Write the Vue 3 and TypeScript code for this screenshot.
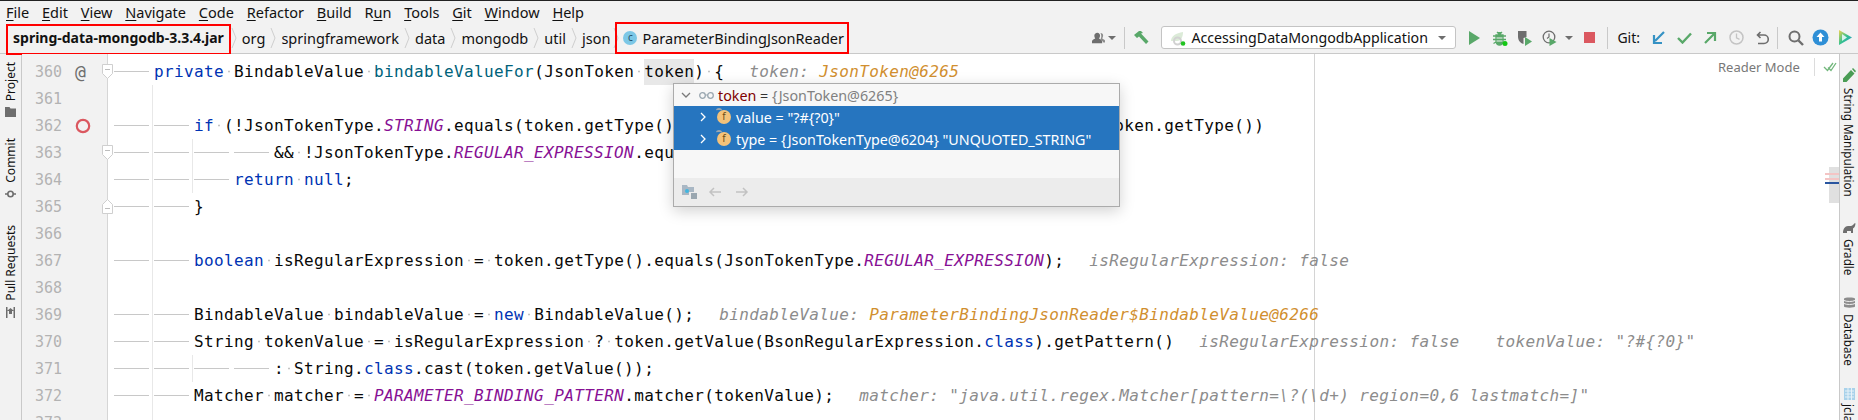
<script setup lang="ts">
type Tok = [string, string?]
interface Line { n: number; tabs: number; toks: Tok[]; mark?: string; fold?: string; guide?: boolean }

const menu = [
  ['', 'F', 'ile'], ['', 'E', 'dit'], ['', 'V', 'iew'], ['', 'N', 'avigate'], ['', 'C', 'ode'], ['', 'R', 'efactor'],
  ['', 'B', 'uild'], ['R', 'u', 'n'], ['', 'T', 'ools'], ['', 'G', 'it'], ['', 'W', 'indow'], ['', 'H', 'elp'],
]
const crumbs = ['org', 'springframework', 'data', 'mongodb', 'util', 'json']

const lines: Line[] = [
  { n: 360, tabs: 1, mark: 'at', fold: 'open', toks: [['private', 'k'], [' '], ['BindableValue'], [' '], ['bindableValueFor', 'm'], ['(JsonToken'], [' '], ['token', 'hl'], [')'], [' '], ['{'], ['', 'gap'], ['token: ', 'h'], ['JsonToken@6265', 'v']] },
  { n: 361, tabs: 0, toks: [] },
  { n: 362, tabs: 2, mark: 'bp', toks: [['if', 'k'], [' '], ['(!JsonTokenType.'], ['STRING', 'f'], ['.equals(token.getType())'], [' '], ['&&'], [' '], ['!JsonTokenType.'], ['UNQUOTED_STRING', 'f'], ['.equals(token.getType())']] },
  { n: 363, tabs: 4, fold: 'open', guide: true, toks: [['&&'], [' '], ['!JsonTokenType.'], ['REGULAR_EXPRESSION', 'f'], ['.equals(token.getType()))'], [' '], ['{']] },
  { n: 364, tabs: 3, guide: true, toks: [['return', 'k'], [' '], ['null', 'k'], [';']] },
  { n: 365, tabs: 2, fold: 'close', toks: [['}']] },
  { n: 366, tabs: 0, toks: [] },
  { n: 367, tabs: 2, toks: [['boolean', 'k'], [' '], ['isRegularExpression'], [' '], ['='], [' '], ['token.getType().equals(JsonTokenType.'], ['REGULAR_EXPRESSION', 'f'], [');'], ['', 'gap'], ['isRegularExpression: false', 'h']] },
  { n: 368, tabs: 0, toks: [] },
  { n: 369, tabs: 2, toks: [['BindableValue'], [' '], ['bindableValue'], [' '], ['='], [' '], ['new', 'k'], [' '], ['BindableValue();'], ['', 'gap'], ['bindableValue: ', 'h'], ['ParameterBindingJsonReader$BindableValue@6266', 'v']] },
  { n: 370, tabs: 2, toks: [['String'], [' '], ['tokenValue'], [' '], ['='], [' '], ['isRegularExpression'], [' '], ['?'], [' '], ['token.getValue(BsonRegularExpression.'], ['class', 'k'], [').getPattern()'], ['', 'gap'], ['isRegularExpression: false', 'h'], ['', 'gap2'], ['tokenValue: "?#{?0}"', 'h']] },
  { n: 371, tabs: 4, guide: true, toks: [[':'], [' '], ['String.'], ['class', 'k'], ['.cast(token.getValue());']] },
  { n: 372, tabs: 2, toks: [['Matcher'], [' '], ['matcher'], [' '], ['='], [' '], ['PARAMETER_BINDING_PATTERN', 'f'], ['.matcher(tokenValue);'], ['', 'gap'], ['matcher: "java.util.regex.Matcher[pattern=\\?(\\d+) region=0,6 lastmatch=]"', 'h']] },
  { n: 373, tabs: 0, toks: [] },
]
</script>

<template>
  <div class="ide">
    <div class="menubar">
      <span v-for="m in menu" :key="m[1] + m[2]" class="menu-item">{{ m[0] }}<u>{{ m[1] }}</u>{{ m[2] }}</span>
    </div>

    <div class="navbar">
      <span class="crumb jar">spring-data-mongodb-3.3.4.jar</span>
      <template v-for="c in crumbs" :key="c">
        <svg class="chev" width="6" height="22" viewBox="0 0 6 22"><path d="M1 1l4 10-4 10" fill="none" stroke="#cfcfcf" /></svg>
        <span class="crumb">{{ c }}</span>
      </template>
      <svg class="chev last" width="6" height="22" viewBox="0 0 6 22"><path d="M1 1l4 10-4 10" fill="none" stroke="#cfcfcf" /></svg>
      <span class="class-ic">c</span>
      <span class="crumb cls">ParameterBindingJsonReader</span>
      <span class="red-box box-a"></span>
      <span class="red-box box-b"></span>

      <div class="tools">
        <svg class="ic-person" width="15" height="14" viewBox="0 0 15 14"><path d="M6 1c2 0 3 1.5 3 3.4 0 1.3-.6 2.3-1.2 3 0 .8 3.2 1.4 3.6 3.1V13H0v-2.5c.4-1.7 3.6-2.3 3.6-3.1C3 6.7 2.600 5.700 2.600 4.400 2.600 2.500 4 1 6 1z" fill="#6e6e6e" /><path d="M9.500 1.300c2 0 3 1.300 3 3 0 1.200-.5 2.200-1 2.900 0 .8 2.800 1.300 3.200 2.900V12h-2c-.3-1.700-2.400-2.700-3.300-3.400.7-1 1.100-2.500 1-4-.1-1.300-.5-2.400-.9-3.300z" fill="#8c8c8c" /></svg>
        <span class="caret c-person"></span>
        <span class="sep sep-a"></span>
        <svg class="ic-hammer" width="15" height="15" viewBox="0 0 15 15"><path d="M0 5l5-4 2 0 2 2-2 .5L14.500 11.500 12 14 5 6.500 3 8z" fill="#59a869" /></svg>
        <div class="combo">
          <svg width="16" height="16" viewBox="0 0 16 16"><path d="M1 11C1 6 6 3 13 2c0 5-2 9-6 9z" fill="#dcebd8" /><circle cx="7.500" cy="11" r="3.500" fill="none" stroke="#d2d2d2" stroke-width="2" /><circle cx="13" cy="13.500" r="2.300" fill="#22c322" /></svg>
          <span class="combo-text">AccessingDataMongodbApplication</span>
          <span class="caret c-combo"></span>
        </div>
        <div class="run-group">
          <span class="slot"><svg width="11" height="14" viewBox="0 0 11 14"><path d="M0 0l11 7-11 7z" fill="#59a869" /></svg></span>
          <span class="slot"><svg width="16" height="16" viewBox="0 0 16 16"><path d="M5 2l1.500 1.500h2L10 2M4 5h7v6.500a3.500 3.500 0 0 1-7 0zM1 6h3M11 6h3M1 9.500h3M11 9.500h3M1.500 13.500L4 12M13.500 13.500L11 12" fill="#59a869" stroke="#59a869" stroke-width="1.300" /><path d="M4.500 8h6M4.500 11h6" stroke="#f2f2f2" /><circle cx="13" cy="13.500" r="2.500" fill="#14c814" /></svg></span>
          <span class="slot"><svg width="16" height="16" viewBox="0 0 16 16"><path d="M1 1h8.500v6l-3 1v6C3 13 1 10 1 6.500z" fill="#6e6e6e" /><path d="M8 7l7 4.500L8 16z" fill="#59a869" /></svg></span>
          <span class="slot"><svg width="15" height="16" viewBox="0 0 15 16"><circle cx="7" cy="7" r="5.800" fill="none" stroke="#6e6e6e" stroke-width="1.300" /><path d="M7 3.500V7L5 8.500" fill="none" stroke="#6e6e6e" stroke-width="1.200" /><path d="M7.500 8L14.500 12 7.500 16z" fill="#59a869" /></svg></span>
        </div>
        <span class="caret c-prof"></span>
        <span class="stop"></span>
        <span class="sep sep-b"></span>
        <span class="git">Git:</span>
        <div class="git-group">
          <span class="slot"><svg width="13" height="13" viewBox="0 0 13 13"><path d="M12 1L3 10M2 4v8h8" fill="none" stroke="#3592c4" stroke-width="2.200" /></svg></span>
          <span class="slot"><svg width="15" height="12" viewBox="0 0 15 12"><path d="M1 6l4.500 4.500L14 1.500" fill="none" stroke="#59a869" stroke-width="2.400" /></svg></span>
          <span class="slot"><svg width="13" height="13" viewBox="0 0 13 13"><path d="M1 12l9-9M3 2h8v8" fill="none" stroke="#59a869" stroke-width="2.200" /></svg></span>
          <span class="slot"><svg width="15" height="15" viewBox="0 0 15 15"><circle cx="7.500" cy="7.500" r="6.500" fill="none" stroke="#c4c4c4" stroke-width="1.500" /><path d="M7.500 3.500v4.300l3 1.500" fill="none" stroke="#c4c4c4" stroke-width="1.300" /></svg></span>
          <span class="slot"><svg width="13" height="14" viewBox="0 0 13 14"><path d="M1.500 4h6.500a4 4 0 0 1 0 8.500H2M4.500 1L1.500 4l3 3" fill="none" stroke="#6e6e6e" stroke-width="1.600" /></svg></span>
        </div>
        <span class="sep sep-c"></span>
        <div class="end-group">
          <span class="slot"><svg width="16" height="16" viewBox="0 0 16 16"><circle cx="6.500" cy="6.500" r="5" fill="none" stroke="#6e6e6e" stroke-width="2" /><path d="M10.500 10.500L15 15" stroke="#6e6e6e" stroke-width="2.400" /></svg></span>
          <span class="slot"><svg width="17" height="17" viewBox="0 0 17 17"><circle cx="8.500" cy="8.500" r="8" fill="#2f8fd6" /><path d="M8.500 3.500l4 4.500h-2.500v4.500h-3V8h-2.500z" fill="#fff" /></svg></span>
          <span class="slot"><svg width="15" height="17" viewBox="0 0 15 17"><defs><linearGradient id="lg" x1="0" x2="1" y1="0" y2="1"><stop offset="0" stop-color="#f2d24e" /><stop offset=".5" stop-color="#35c28e" /><stop offset="1" stop-color="#1e88d8" /></linearGradient></defs><path d="M1 1l13 7.500L1 16z" fill="url(#lg)" /><path d="M4 5l5 3.500L4 12z" fill="#d8f3f0" /></svg></span>
        </div>
      </div>
    </div>

    <div class="main">
      <aside class="strip left">
        <div class="tw tw-project">
          <span class="vl">Project</span>
          <svg width="11" height="10" viewBox="0 0 11 10"><path d="M0 0h4.500l1 1.500H11V10H0z" fill="#6e6e6e" /></svg>
        </div>
        <div class="tw tw-commit">
          <span class="vl">Commit</span>
          <svg width="11" height="10" viewBox="0 0 11 10"><circle cx="5.500" cy="5" r="2.700" fill="none" stroke="#6e6e6e" stroke-width="1.600" /><path d="M0 5h3M8 5h3" stroke="#6e6e6e" stroke-width="1.400" /></svg>
        </div>
        <div class="tw tw-pull">
          <span class="vl">Pull Requests</span>
          <svg width="11" height="11" viewBox="0 0 11 11"><path d="M1 0h1.500v11H1zM8.500 0H10v11H8.500zM5.500 1L9 4H7v3H4V4H2z" fill="#6e6e6e" /></svg>
        </div>
      </aside>

      <div class="editor">
        <div v-for="l in lines" :key="l.n" class="row" :class="{ guided: l.guide }">
          <div class="gutter">
            <span class="num">{{ l.n }}</span>
            <span class="mark">
              <template v-if="l.mark === 'at'">@</template>
              <svg v-else-if="l.mark === 'bp'" width="16" height="16" viewBox="0 0 16 16"><circle cx="8" cy="8" r="6.200" fill="none" stroke="#db5860" stroke-width="2.200" /></svg>
            </span>
            <svg v-if="l.fold" class="fold" :class="{ flip: l.fold === 'close' }" width="11" height="15" viewBox="0 0 11 15"><path d="M.5.500h10v9l-5 5-5-5z" fill="#fff" stroke="#cfcfcf" /><path d="M3 5.500h5" stroke="#bdbdbd" /></svg>
          </div>
          <div class="code">
            <span v-for="t in l.tabs" :key="t" class="tab"></span>
            <template v-for="(tk, i) in l.toks" :key="i">
              <span v-if="tk[0] === ' '" class="sp">{{ tk[0] }}</span>
              <span v-else :class="tk[1]">{{ tk[0] }}</span>
            </template>
          </div>
        </div>

        <div class="reader"><span>Reader Mode</span><i class="reader-sep"></i>
          <svg width="14" height="12" viewBox="0 0 14 12"><path d="M1 6l3.500 3.500L10 2M5 6.500l3 3L13 2" fill="none" stroke="#72b77c" stroke-width="1.300" /></svg>
        </div>
        <div class="thumb"></div>
        <div class="stripe p1"></div>
        <div class="stripe p2"></div>
        <div class="stripe b1"></div>

        <div class="popup">
          <div class="p-head">
            <svg class="arrow-d" width="10" height="6" viewBox="0 0 10 6"><path d="M1 1l4 4 4-4" fill="none" stroke="#7a7a7a" stroke-width="1.300" /></svg>
            <svg class="glasses" width="15" height="7" viewBox="0 0 15 7"><circle cx="3.500" cy="3.500" r="2.800" fill="none" stroke="#9aa7b0" stroke-width="1.300" /><circle cx="11.500" cy="3.500" r="2.800" fill="none" stroke="#9aa7b0" stroke-width="1.300" /><path d="M6 3h3" stroke="#9aa7b0" /></svg>
            <span class="p-name">token</span><span class="p-eq"> = </span><span class="p-val">{JsonToken@6265}</span>
          </div>
          <div class="p-row">
            <svg class="arrow-r" width="6" height="10" viewBox="0 0 6 10"><path d="M1 1l4 4-4 4" fill="none" stroke="#fff" stroke-width="1.300" /></svg>
            <span class="f-ic">f</span>
            <span>value = "?#{?0}"</span>
          </div>
          <div class="p-row">
            <svg class="arrow-r" width="6" height="10" viewBox="0 0 6 10"><path d="M1 1l4 4-4 4" fill="none" stroke="#fff" stroke-width="1.300" /></svg>
            <span class="f-ic">f</span>
            <span>type = {JsonTokenType@6204} "UNQUOTED_STRING"</span>
          </div>
          <div class="p-empty"></div>
          <div class="p-foot">
            <svg width="15" height="14" viewBox="0 0 15 14"><path d="M0 0h5l1 2h6v5H7v3H0z" fill="#a9b7c4" /><circle cx="5" cy="6" r="2" fill="#40b6e0" /><path d="M9 8h6v6H9z" fill="#9aa7b0" /></svg>
            <svg class="f-a1" width="14" height="10" viewBox="0 0 14 10"><path d="M13 5H2M6 1L2 5l4 4" fill="none" stroke="#c2c2c2" stroke-width="1.500" /></svg>
            <svg class="f-a2" width="14" height="10" viewBox="0 0 14 10"><path d="M1 5h11M8 1l4 4-4 4" fill="none" stroke="#c2c2c2" stroke-width="1.500" /></svg>
          </div>
        </div>
      </div>

      <aside class="strip right">
        <svg class="r-ic" width="13" height="14" viewBox="0 0 13 14"><path d="M0 14v-3.500L8 2l3.500 3.500L3.500 14zM9 1l1-1 3 3-1 1.500z" fill="#499c54" /></svg>
        <span class="rl rl-string">String Manipulation</span>
        <svg class="r-ic" width="13" height="11" viewBox="0 0 13 11"><path d="M0 11c0-4 2-7 5-7h3c1 0 1.500-1 2.500-1.500.5-1 1.500-1.500 2-1-.2 1.500-.5 4-2.500 5v4.500H8V9H4v2z" fill="#6e6e6e" /></svg>
        <span class="rl rl-gradle">Gradle</span>
        <svg class="r-ic" width="11" height="13" viewBox="0 0 11 13"><path d="M0 2.500C0 1 11 1 11 2.500v8C11 12 0 12 0 10.500z" fill="#8c8c8c" /><path d="M0 4.500c2 1.300 9 1.300 11 0M0 7.500c2 1.300 9 1.300 11 0" fill="none" stroke="#f2f2f2" /></svg>
        <span class="rl rl-db">Database</span>
        <svg class="r-ic" width="11" height="12" viewBox="0 0 11 12"><rect width="11" height="12" fill="#a9d2ea" /><path d="M1 3h9M1 6h9M1 9h9M4 0v12M7.500 0v12" stroke="#e8f2f8" /></svg>
        <span class="rl rl-jc">jclasslib</span>
      </aside>
    </div>
  </div>
</template>

<style>
html, body { margin: 0; background: #fff; }
</style>

<style scoped>
.ide {
  width: 1858px;
  height: 420px;
  overflow: hidden;
  display: flex;
  flex-direction: column;
  background: #f2f2f2;
  font-family: "Noto Sans", sans-serif;
  color: #111;
  border-top: 1px solid #222;
  box-sizing: border-box;
}
.menubar {
  height: 21px;
  display: flex;
  align-items: center;
  gap: 12.8px;
  padding-left: 6px;
  font-size: 14.5px;
}
.menu-item u { text-underline-offset: 2px; }

.navbar {
  position: relative;
  height: 31px;
  display: flex;
  align-items: center;
  padding-left: 13px;
  font-size: 14.5px;
  border-bottom: 1px solid #c9c9c9;
  flex: none;
}
.crumb { white-space: nowrap; }
.jar { font-weight: 700; font-size: 14px; margin-right: 2px; }
.chev { margin: 0 5px; flex: none; }
.chev.last { margin: 0 0 0 3px; }
.class-ic {
  width: 14px;
  height: 14px;
  margin-left: 4px;
  border-radius: 50%;
  background: #7cc7e6;
  color: #1f4f66;
  font-size: 10px;
  line-height: 13px;
  text-align: center;
  flex: none;
}
.cls { margin-left: 5px; }
.red-box { position: absolute; border: 2px solid #f00; box-sizing: border-box; pointer-events: none; }
.box-a { left: 6px; top: 2px; width: 225px; height: 31px; }
.box-b { left: 615px; top: 0; width: 234px; height: 32px; }

.tools {
  position: absolute;
  left: 1092px;
  right: 0;
  top: 0;
  bottom: 0;
  display: flex;
  align-items: center;
  font-size: 14px;
}
.caret { width: 0; height: 0; border-left: 4px solid transparent; border-right: 4px solid transparent; border-top: 4px solid #6e6e6e; flex: none; }
.c-person { margin-left: 3px; }
.sep { width: 1px; height: 22px; background: #c9c9c9; flex: none; }
.sep-a { margin-left: 8px; }
.ic-hammer { margin-left: 9px; flex: none; }
.combo {
  margin-left: 12px;
  width: 295px;
  height: 23px;
  box-sizing: border-box;
  border: 1px solid #c4c4c4;
  border-radius: 3px;
  background: #fff;
  display: flex;
  align-items: center;
  padding-left: 8px;
  flex: none;
}
.combo-text { margin-left: 5px; font-size: 14.2px; white-space: nowrap; }
.c-combo { margin-left: auto; margin-right: 9px; }
.run-group { display: flex; margin-left: 6px; }
.slot { width: 25px; display: flex; justify-content: center; align-items: center; flex: none; }
.c-prof { margin-left: 3px; }
.stop { width: 11px; height: 11px; background: #db5860; margin-left: 11px; flex: none; }
.sep-b { margin-left: 12px; }
.git { margin-left: 9px; width: 23px; }
.git-group { display: flex; gap: 1px; margin-left: 6px; }
.sep-c { margin-left: 2px; }
.end-group { display: flex; margin-left: 5px; }

.main { flex: 1; display: flex; min-height: 0; }
.strip { flex: none; background: #f2f2f2; }
.strip.left {
  width: 21px;
  border-right: 1px solid #c9c9c9;
  display: flex;
  flex-direction: column;
  align-items: center;
  font-size: 12px;
}
.tw { display: flex; flex-direction: column; align-items: center; gap: 6px; }
.tw-project { margin-top: 8px; }
.tw-commit { margin-top: 21px; }
.tw-pull { margin-top: 26px; }
.vl { writing-mode: vertical-rl; transform: rotate(180deg); line-height: 14px; white-space: nowrap; }

.strip.right {
  width: 18px;
  border-left: 1px solid #c9c9c9;
  display: flex;
  flex-direction: column;
  align-items: center;
  padding-top: 14px;
  font-size: 11.7px;
  overflow: hidden;
}
.r-ic { flex: none; }
.rl { writing-mode: vertical-rl; line-height: 14px; white-space: nowrap; flex: none; margin-top: 6px; }
.rl-string { margin-bottom: 25px; }
.rl-gradle { margin-bottom: 21px; }
.rl-db { margin-top: 5px; margin-bottom: 22px; }
.rl-jc { margin-top: 4px; }

.editor {
  position: relative;
  flex: 1;
  padding-top: 4px;
  overflow: hidden;
  background:
    linear-gradient(#d4d4d4, #d4d4d4) no-repeat 1292px 0 / 1px 100%,
    linear-gradient(#e8e8e8, #e8e8e8) no-repeat 130px 31px / 1px 100%,
    linear-gradient(to right, #f2f2f2 85px, #d6d6d6 85px, #d6d6d6 86px, #fff 86px);
}
.row {
  height: 27px;
  display: flex;
  align-items: center;
  font-family: "DejaVu Sans Mono", monospace;
  font-size: 16px;
  letter-spacing: 0.37px;
  white-space: pre;
}
.row.guided {
  background: linear-gradient(#e8e8e8, #e8e8e8) no-repeat 170px 0 / 1px 100%;
}
.gutter { position: relative; width: 86px; flex: none; display: flex; align-items: center; height: 100%; }
.num { margin-left: 13px; width: 40px; color: #b3b3b3; font-size: 15px; letter-spacing: 0; }
.mark { color: #6e6e6e; display: flex; align-items: center; font-size: 18px; letter-spacing: 0; }
.fold { position: absolute; left: 80px; top: 6px; }
.fold.flip { transform: scaleY(-1); }
.code { padding-left: 6px; display: flex; align-items: center; height: 100%; color: #080808; }
.tab { width: 40px; height: 100%; flex: none; background: linear-gradient(#c8c8c8, #c8c8c8) no-repeat 0 50% / 35px 1px; }
.sp { width: 10px; flex: none; background: radial-gradient(circle, #c4c4c4 0.9px, transparent 1.2px); }
.k { color: #0033b3; }
.m { color: #00627a; }
.f { color: #871094; font-style: italic; }
.hl { background: #e8e8e8; height: 26px; line-height: 26px; }
.gap { width: 25px; flex: none; }
.gap2 { width: 36px; flex: none; }
.h { color: #8c8c8c; font-style: italic; }
.v { color: #d18f2f; font-style: italic; }

.reader {
  position: absolute;
  top: 3px;
  left: 1696px;
  height: 20px;
  display: flex;
  align-items: center;
  font-size: 13px;
  color: #787878;
  white-space: nowrap;
}
.reader-sep { width: 1px; height: 18px; background: #dcdcdc; margin: 0 8px 0 14px; }
.thumb { position: absolute; left: 1807px; top: 113px; width: 10px; height: 36px; background: #e0e0e0; }
.stripe { position: absolute; left: 1803px; width: 14px; height: 2px; }
.p1 { top: 119px; background: #f4c4c4; }
.p2 { top: 124px; background: #f4c4c4; }
.b1 { top: 128px; background: #2a56a0; }

.popup {
  position: absolute;
  left: 651px;
  top: 29px;
  width: 447px;
  height: 124px;
  box-sizing: border-box;
  border: 1px solid #ababab;
  background: #f7f7f7;
  box-shadow: 0 4px 14px rgba(0, 0, 0, 0.18);
  display: flex;
  flex-direction: column;
  font-size: 14.3px;
  letter-spacing: 0;
}
.p-head { height: 22px; display: flex; align-items: center; padding-left: 7px; white-space: pre; flex: none; }
.arrow-d { flex: none; }
.glasses { margin-left: 8px; margin-right: 4px; flex: none; }
.p-name { color: #7f0000; }
.p-eq { color: #333; }
.p-val { color: #808080; }
.p-row {
  height: 22px;
  background: #2675bf;
  color: #fff;
  display: flex;
  align-items: center;
  padding-left: 26px;
  white-space: pre;
  flex: none;
}
.f-ic {
  position: relative;
  width: 14px;
  height: 14px;
  border-radius: 50%;
  background: #f4c27a;
  color: #6b4a14;
  font-size: 10px;
  line-height: 13px;
  text-align: center;
  margin: 0 5px 0 11px;
  flex: none;
}
.f-ic::before {
  content: "";
  position: absolute;
  left: -1px;
  top: -2px;
  width: 6px;
  height: 5px;
  border-top: 2px solid #9aa7b0;
  border-radius: 50%;
  box-sizing: border-box;
}
.p-empty { height: 28px; flex: none; }
.p-foot { flex: 1; background: #ececec; display: flex; align-items: center; padding-left: 8px; }
.f-a1 { margin-left: 11px; }
.f-a2 { margin-left: 13px; }
</style>
